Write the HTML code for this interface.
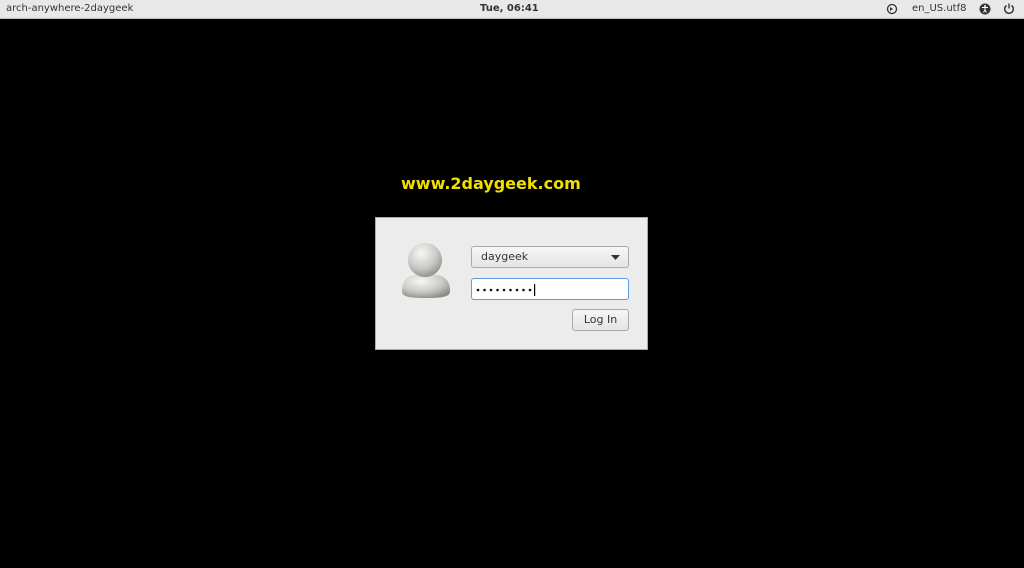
<!DOCTYPE html>
<html><head><style>
body{margin:0;width:1024px;height:568px;background:#000;overflow:hidden;font-family:"DejaVu Sans","Liberation Sans",sans-serif;position:relative}
.bar{position:absolute;left:0;top:0;width:1024px;height:18px;background:#e8e8e8;border-bottom:1px solid #bbb;font-size:10px;color:#333;line-height:18px}
.abs{position:absolute}
.panel{position:absolute;left:375px;top:217px;width:273px;height:133px;background:#ececec;border:1px solid #aaa;box-sizing:border-box}
.combo{left:471px;top:246px;width:158px;height:22px;border:1px solid #aaa;border-radius:3px;background:linear-gradient(#f6f6f6,#e4e4e4);box-sizing:border-box;font-size:11px;color:#333;line-height:20px;padding-left:9px}
.pw{left:471px;top:278px;width:158px;height:22px;border:1px solid #5f9de0;border-radius:3px;background:#fff;box-sizing:border-box}
.btn{left:572px;top:309px;width:57px;height:22px;border:1px solid #aaa;border-radius:3px;background:linear-gradient(#f6f6f6,#e4e4e4);box-sizing:border-box;font-size:11px;color:#333;text-align:center;line-height:20px}
</style></head><body>
<div class="bar">
<span class="abs" style="left:6px">arch-anywhere-2daygeek</span>
<span class="abs" style="left:480px;font-weight:bold">Tue, 06:41</span>
<span class="abs" style="left:886px;top:0">
<svg width="12" height="18" viewBox="0 0 12 18"><circle cx="6" cy="9" r="4.5" fill="none" stroke="#333" stroke-width="1.3"/><path d="M4 7l3 2-3 2z" fill="#333"/></svg></span>
<span class="abs" style="left:912px">en_US.utf8</span>
<span class="abs" style="left:979px;top:0"><svg width="12" height="18" viewBox="0 0 12 18"><circle cx="6" cy="9" r="5.5" fill="#333"/><circle cx="6" cy="6" r="1" fill="#fff"/><path d="M3 7.5h6M6 7.5v2.5l-1.5 2.5M6 10l1.5 2.5" stroke="#fff" stroke-width="1" fill="none"/></svg></span>
<span class="abs" style="left:1003px;top:0"><svg width="12" height="18" viewBox="0 0 12 18"><path d="M3.5 5.5a4.3 4.3 0 1 0 5 0" fill="none" stroke="#333" stroke-width="1.4"/><path d="M6 3.5v5" stroke="#333" stroke-width="1.4"/></svg></span>
</div>
<div class="abs" style="left:401px;top:174px;font-size:16px;font-weight:bold;color:#f0e000">www.2daygeek.com</div>
<div class="panel"></div>
<svg class="abs" style="left:400px;top:242px" width="52" height="58" viewBox="0 0 52 58">
<defs><radialGradient id="g" cx="0.4" cy="0.3" r="0.75"><stop offset="0" stop-color="#f8f8f6"/><stop offset="0.6" stop-color="#c8c8c4"/><stop offset="1" stop-color="#8a8a86"/></radialGradient></defs>
<path d="M2 49c0-12 6-17 24-17s24 5 24 17c0 5-4 7-24 7S2 54 2 49z" fill="url(#g)"/>
<circle cx="25" cy="18" r="17" fill="url(#g)"/>
</svg>
<div class="abs combo">daygeek<svg style="position:absolute;right:8px;top:8px" width="9" height="5"><path d="M0 0h9l-4.5 5z" fill="#333"/></svg></div>
<div class="abs pw"><svg style="position:absolute;left:4px;top:5px" width="70" height="12">
<g fill="#111"><circle cx="2" cy="6" r="1.3"/><circle cx="8.5" cy="6" r="1.3"/><circle cx="15" cy="6" r="1.3"/><circle cx="21.5" cy="6" r="1.3"/><circle cx="28" cy="6" r="1.3"/><circle cx="34.5" cy="6" r="1.3"/><circle cx="41" cy="6" r="1.3"/><circle cx="47.5" cy="6" r="1.3"/><circle cx="54" cy="6" r="1.3"/></g>
<rect x="58" y="0" width="1.2" height="12" fill="#000"/></svg></div>
<div class="abs btn">Log In</div>
</body></html>
